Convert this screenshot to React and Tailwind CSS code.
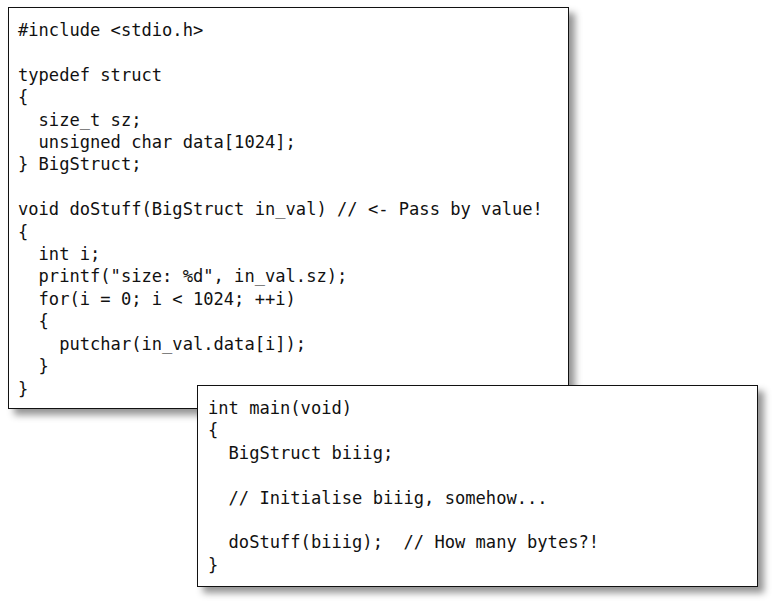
import React from 'react';

const mono = { fontFamily: '"DejaVu Sans Mono", "Liberation Mono", monospace' };

const first = `#include <stdio.h>

typedef struct
{
  size_t sz;
  unsigned char data[1024];
} BigStruct;

void doStuff(BigStruct in_val) // <- Pass by value!
{
  int i;
  printf("size: %d", in_val.sz);
  for(i = 0; i < 1024; ++i)
  {
    putchar(in_val.data[i]);
  }
}`;

const second = `int main(void)
{
  BigStruct biiig;

  // Initialise biiig, somehow...

  doStuff(biiig);  // How many bytes?!
}`;

// a code listing drawn as a bordered sheet with a soft drop shadow
const Sheet = ({ code, className }) => (
  <div
    className={`absolute border border-[#111] bg-white shadow-[6px_6px_7px_rgba(0,0,0,0.42)] ${className}`}
  >
    <pre className="m-0 whitespace-pre text-[17.1px] leading-[22.4px] text-[#111]" style={mono}>
      {code}
    </pre>
  </div>
);

export default function App() {
  return (
    <div className="relative h-[607px] w-[778px] overflow-hidden bg-white">
      <Sheet code={first} className="left-[8px] top-[7px] h-[402px] w-[561px] pl-[9px] pt-[11px]" />
      <Sheet code={second} className="left-[197px] top-[385px] h-[202px] w-[561px] pl-[10px] pt-[11px]" />
    </div>
  );
}
